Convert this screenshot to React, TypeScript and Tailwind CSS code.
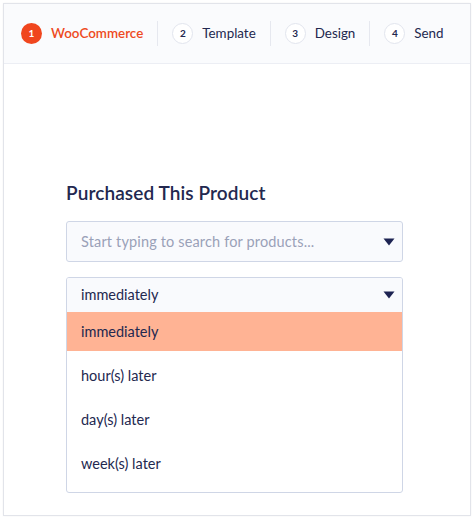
import React from "react";

const Step = ({ n, label, active }: { n: number; label: string; active?: boolean }) => (
  <div className="flex items-center gap-[9px]">
    {active ? (
      <div className="w-[21px] h-[21px] rounded-full bg-[#f0461e] text-white text-[10px] font-bold flex items-center justify-center">{n}</div>
    ) : (
      <div className="w-[21px] h-[21px] rounded-full bg-white border border-[#e2e5ee] text-[#23284f] text-[10px] font-bold flex items-center justify-center">{n}</div>
    )}
    <span className={active ? "text-[13.4px] font-semibold text-[#ee4a22]" : "text-[13.4px] text-[#23284f]"}>{label}</span>
  </div>
);

const Sep = () => <div className="w-px h-[25px] bg-[#e6e8ef] mx-[14px]" />;

const Caret = () => (
  <svg width="12" height="8" viewBox="0 0 12 8"><path d="M0.5 0.5 H11.5 L6 7.5 Z" fill="#1d2352" /></svg>
);

export default function App() {
  return (
    <div className="w-[474px] h-[519px] bg-white pt-[3px] pl-[3px]" style={{ fontFamily: "Lato, 'Noto Sans', sans-serif" }}>
      <div className="w-[468px] h-[513px] border border-[#e2e4ea] flex flex-col shadow-[0_0_2px_rgba(0,0,0,0.05)]">
        <div className="h-[60px] shrink-0 bg-[#fafbfd] border-b border-[#eceef4] flex items-center pl-[17px]">
          <Step n={1} label="WooCommerce" active />
          <Sep />
          <Step n={2} label="Template" />
          <Sep />
          <Step n={3} label="Design" />
          <Sep />
          <Step n={4} label="Send" />
        </div>
        <div className="flex-1 pl-[62px] pr-[67px] pt-[117px]">
          <div className="text-[19px] font-semibold text-[#23284f] leading-[24px] tracking-[0.1px]">Purchased This Product</div>
          <div className="mt-[16px] h-[41px] border border-[#cfd6e6] rounded-[3px] bg-[#f9fafd] flex items-center justify-between pl-[14px] pr-[7px]">
            <span className="text-[14.5px] text-[#9aa1b8] tracking-[0.15px]">Start typing to search for products...</span>
            <Caret />
          </div>
          <div className="mt-[15px] border border-[#cfd6e6] rounded-[3px] bg-white overflow-hidden">
            <div className="h-[34px] bg-[#f9fafd] flex items-center justify-between pl-[14px] pr-[7px]">
              <span className="text-[14.5px] text-[#23284f]">immediately</span>
              <Caret />
            </div>
            <div className="flex flex-col gap-[5px] pb-[9px]">
              <div className="h-[39px] bg-[#ffb394] flex items-center pl-[14px] text-[14.5px] text-[#23284f]">immediately</div>
              <div className="h-[39px] flex items-center pl-[14px] text-[14.5px] text-[#23284f]">hour(s) later</div>
              <div className="h-[39px] flex items-center pl-[14px] text-[14.5px] text-[#23284f]">day(s) later</div>
              <div className="h-[39px] flex items-center pl-[14px] text-[14.5px] text-[#23284f]">week(s) later</div>
            </div>
          </div>
        </div>
      </div>
    </div>
  );
}
